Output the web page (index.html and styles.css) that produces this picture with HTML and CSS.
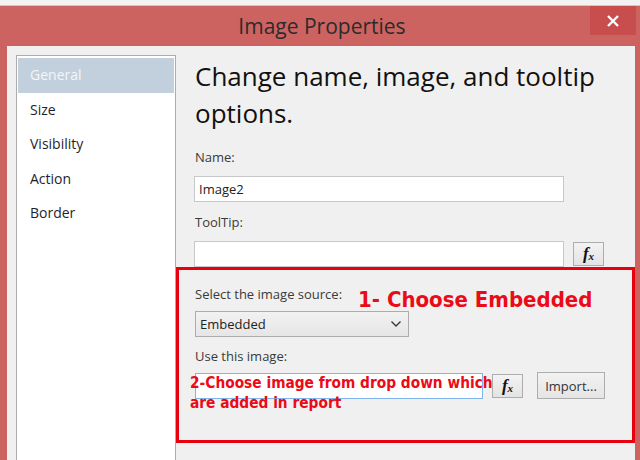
FILE: index.html
```html
<html>
<head>
    <title>Image Properties</title>
    <link rel="stylesheet" href="styles.css">
</head>
<body>
    <div class="window">
        <div class="titlebar">
            <div class="title">Image Properties</div>
            <div class="close">
                <svg width="14" height="14" viewBox="0 0 14 14"><path d="M2 2 L12 12 M12 2 L2 12" stroke="#fff" stroke-width="2.4" fill="none"/></svg>
            </div>
        </div>
        <div class="content">
            <ul class="nav">
                <li class="selected">General</li>
                <li>Size</li>
                <li>Visibility</li>
                <li>Action</li>
                <li>Border</li>
            </ul>
            <div class="pane">
                <h1>Change name, image, and tooltip options.</h1>
                <label class="first">Name:</label>
                <div class="row">
                    <div class="input wide">Image2</div>
                </div>
                <label>ToolTip:</label>
                <div class="row">
                    <div class="input wide"></div>
                    <div class="fx"><i>f</i><b>x</b></div>
                </div>
                <div class="source">
                    <label>Select the image source:</label>
                    <div class="select">
                        <span>Embedded</span>
                        <svg width="12" height="8" viewBox="0 0 12 8"><path d="M1.5 1.5 L6 6 L10.5 1.5" stroke="#333" stroke-width="1.3" fill="none"/></svg>
                    </div>
                    <label>Use this image:</label>
                    <div class="row">
                        <div class="input focus"></div>
                        <div class="fx"><i>f</i><b>x</b></div>
                        <div class="button">Import...</div>
                    </div>
                    <div class="note note-1">1- Choose Embedded</div>
                    <div class="note note-2">2-Choose image from drop down which<br>are added in report</div>
                </div>
            </div>
        </div>
    </div>
</body>
</html>
```

FILE: styles.css
```css
body {
    margin: 0;
    background-color: #f2f2f2;
    font-family: "Open Sans", "Liberation Sans", sans-serif;
    overflow: hidden;
}

.window {
    margin-top: 5px;
    border-top: 1px solid #c9c9c9;
    background-color: #cd6360;
    padding: 0 5px 0 7px;
    height: 460px;
}

.titlebar {
    height: 40px;
    display: flex;
    justify-content: center;
    position: relative;
}

.title {
    font-size: 21px;
    color: #2b2b2b;
    line-height: 40px;
    padding-left: 2px;
}

.close {
    position: absolute;
    right: -1px;
    top: 0;
    width: 46px;
    height: 29px;
    background-color: #c84e4e;
    display: flex;
    align-items: center;
    justify-content: center;
}

.content {
    background-color: #f0f0f0;
    height: 420px;
    display: flex;
    padding: 9px 0 0 9px;
}

.nav {
    list-style: none;
    margin: 0;
    padding: 2px 1px;
    width: 156px;
    background-color: #fff;
    border: 1px solid #acacac;
    border-bottom: none;
}

.nav li {
    height: 34.5px;
    line-height: 33px;
    padding-left: 12px;
    font-size: 14px;
    color: #1e1e2e;
}

.nav .selected {
    background-color: #c2cfdc;
    color: #f4f6f8;
}

.pane {
    flex: 1;
}

.pane h1 {
    margin: 0 0 0 19px;
    padding-top: 3px;
    width: 420px;
    font-size: 26px;
    font-weight: normal;
    line-height: 37px;
    color: #111;
}

label {
    display: block;
    font-size: 13px;
    color: #3a3a3a;
    margin: 0;
}

.pane > label {
    margin: 11px 0 0 19px;
}

.pane > .first {
    margin-top: 16px;
}

.row {
    display: flex;
    align-items: center;
    margin-top: 10px;
}

.pane > .row {
    margin-left: 18px;
}

.input {
    background-color: #fff;
    border: 1px solid #c8c8c8;
    font-size: 13px;
    line-height: 24px;
    padding-left: 4px;
    box-sizing: border-box;
    height: 26px;
    color: #222;
}

.wide {
    width: 370px;
}

.fx {
    width: 31px;
    height: 24px;
    box-sizing: border-box;
    border: 1px solid #adadad;
    background: linear-gradient(#f3f3f3, #e3e3e3);
    margin-left: 9px;
    display: flex;
    align-items: center;
    justify-content: center;
    font-family: "Liberation Serif", serif;
    color: #111;
}

.fx i {
    font-weight: bold;
    font-size: 17px;
}

.fx b {
    font-style: italic;
    font-size: 11px;
    margin-top: 4px;
}

.source {
    position: relative;
    box-sizing: border-box;
    height: 176px;
    border: 3px solid #e8000f;
    padding: 15px 0 0 16px;
}

.select {
    width: 214px;
    height: 26px;
    box-sizing: border-box;
    margin-top: 8px;
    border: 1px solid #acacac;
    background: linear-gradient(#f2f2f2, #e6e6e6);
    display: flex;
    align-items: center;
    justify-content: space-between;
    padding: 0 6px 0 4px;
    font-size: 13px;
    color: #222;
    margin-bottom: 10px;
}

.source .row {
    margin-top: 7px;
}

.focus {
    width: 288px;
    border-color: #7eb4ea;
}

.button {
    margin-left: 14px;
    width: 68px;
    height: 27px;
    box-sizing: border-box;
    border: 1px solid #adadad;
    background: linear-gradient(#f2f2f2, #e5e5e5);
    font-size: 13px;
    color: #333;
    display: flex;
    align-items: center;
    justify-content: center;
}

/* red callouts drawn over the form */
.note {
    position: absolute;
    color: #ec0a16;
    font-family: "DejaVu Sans Condensed", "DejaVu Sans", sans-serif;
    font-weight: bold;
}

.note-1 {
    left: 179px;
    top: 17px;
    font-size: 22px;
}

.note-2 {
    left: 11px;
    top: 103px;
    font-size: 15.3px;
    line-height: 20px;
}
```
